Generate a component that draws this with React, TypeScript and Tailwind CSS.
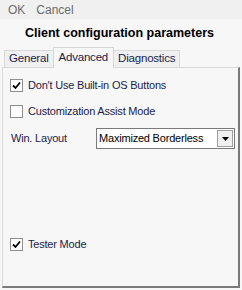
import { useState } from 'react';

const Check = ({ checked }: { checked: boolean }) => (
    <span className="w-[13px] h-[13px] border border-[#8e8f8f] bg-white flex items-center justify-center shrink-0">
        {checked && (
            <svg width="9" height="9" viewBox="0 0 9 9">
                <path d="M1 4.5 L3.5 7 L8 1.5" stroke="#000" strokeWidth="1.8" fill="none" />
            </svg>
        )}
    </span>
);

const Row = ({ label, checked }: { label: string; checked: boolean }) => (
    <div className="flex items-center gap-[5px] h-[13px]">
        <Check checked={checked} />
        <span className="text-[11px] tracking-[-0.2px] text-[#1c1c4c] leading-none whitespace-nowrap">{label}</span>
    </div>
);

export default function App() {
    const [tab] = useState('Advanced');
    const tabs = ['General', 'Advanced', 'Diagnostics'];
    return (
        <div className="w-[242px] h-[290px] bg-[#f7f7f7] flex flex-col font-['Liberation_Sans',Arial,sans-serif] overflow-hidden">
            <div className="h-[19px] bg-[#f0f0f0] flex items-center gap-[11px] pl-[8px] text-[12px] text-[#6d6d6d]">
                <span>OK</span>
                <span>Cancel</span>
            </div>
            <div className="h-[28px] flex items-center justify-center text-[12.5px] font-bold text-black pr-[3px] whitespace-nowrap">
                Client configuration parameters
            </div>
            <div className="flex items-end pl-[4px] h-[20px]">
                {tabs.map((t) =>
                    t === tab ? (
                        <div
                            key={t}
                            className="h-[21px] px-[5px] -mx-[1px] mb-[-1px] z-10 bg-[#f7f7f7] border border-b-0 border-[#d6d6d6] flex items-center text-[11.5px] tracking-[-0.2px] text-[#1c1c4c]"
                        >
                            {t}
                        </div>
                    ) : (
                        <div
                            key={t}
                            className="h-[17px] px-[4px] bg-[#f0f0f0] border border-b-0 border-[#d9d9d9] flex items-center text-[11.5px] tracking-[-0.2px] text-[#1c1c4c]"
                        >
                            {t}
                        </div>
                    )
                )}
            </div>
            <div className="flex-1 mx-[2px] mb-[2px] border-l border-t border-[#d9d9d9] border-r-2 border-r-[#7a7a7a] border-b-2 border-b-[#7a7a7a] flex flex-col pl-[7px] pt-[11px]">
                <Row label="Don't Use Built-in OS Buttons" checked />
                <div className="h-[13px]" />
                <Row label="Customization Assist Mode" checked={false} />
                <div className="flex items-center mt-[10px] h-[21px]">
                    <span className="text-[11px] tracking-[-0.2px] text-[#1c1c4c] w-[86px] pl-[1px] whitespace-nowrap">Win. Layout</span>
                    <div className="w-[139px] h-[21px] bg-white border border-[#7a7a7a] flex items-center">
                        <span className="flex-1 text-[11px] tracking-[-0.2px] text-black pl-[2px] leading-none whitespace-nowrap">Maximized Borderless</span>
                        <span className="w-[16px] h-[17px] mr-[1px] bg-[#f0f0f0] border border-[#a0a0a0] flex items-center justify-center">
                            <svg width="7" height="4" viewBox="0 0 7 4">
                                <path d="M0 0 H7 L3.5 4 Z" fill="#000" />
                            </svg>
                        </span>
                    </div>
                </div>
                <div className="h-[89px]" />
                <Row label="Tester Mode" checked />
            </div>
        </div>
    );
}
